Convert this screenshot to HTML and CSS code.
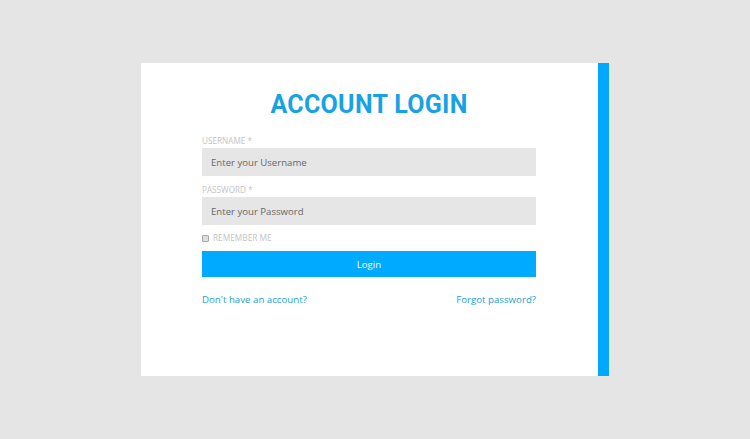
FILE: index.html
```html
<!DOCTYPE html>
<html lang="en">
<head>
    <meta charset="UTF-8">
    <meta name="viewport" content="width=device-width, initial-scale=1.0">
    <title>Account Login</title>
    <link rel="stylesheet" href="styles.css">
</head>
<body>
    <!-- Login Card -->
    <div class="login-card">
        <div class="login-body">
            <h1>ACCOUNT LOGIN</h1>
            <form class="login-form">
                <label class="field-label" for="username">USERNAME *</label>
                <input class="field-input" type="text" id="username" placeholder="Enter your Username">
                <label class="field-label" for="password">PASSWORD *</label>
                <input class="field-input" type="password" id="password" placeholder="Enter your Password">
                <label class="remember">
                    <span class="checkbox"></span>
                    REMEMBER ME
                </label>
                <button type="button" class="login-btn">Login</button>
                <div class="login-links">
                    <a href="#">Don't have an account?</a>
                    <a href="#">Forgot password?</a>
                </div>
            </form>
        </div>
        <div class="accent-bar"></div>
    </div>
</body>
</html>
```

FILE: styles.css
```css
/* Global Styling */
body {
    margin: 0;
    background-color: #e5e5e5;
    font-family: "Open Sans", sans-serif;
    height: 439px;
}
/* Login Card */
.login-card {
    display: flex;
    width: 468px;
    height: 313px;
    margin: 63px 0 0 141px;
}
.login-body {
    flex-grow: 1;
    background-color: #fff;
    padding: 0 62px 0 61px;
}
.accent-bar {
    width: 11px;
    background-color: #00a8ff;
}
.login-body h1 {
    font-family: Roboto, sans-serif;
    font-weight: 700;
    font-size: 25px;
    letter-spacing: 0.3px;
    color: #18a2e6;
    text-align: center;
    margin: 28px 0 17px;
    line-height: 27px;
}
/* Form */
.login-form {
    display: flex;
    flex-direction: column;
}
.field-label {
    font-size: 8.2px;
    color: #c4c4c4;
    line-height: 12px;
    margin-bottom: 1px;
}
.field-input {
    height: 28px;
    border: none;
    background-color: #e6e6e6;
    padding: 0 9px;
    font-family: "Open Sans", sans-serif;
    font-size: 9.6px;
    color: #555;
    margin-bottom: 8px;
    outline: none;
}
.field-input::placeholder {
    color: #666;
}
.remember {
    display: flex;
    align-items: center;
    gap: 4px;
    font-size: 8.3px;
    color: #c4c4c4;
    line-height: 12px;
    margin: -1px 0 7px;
}
.checkbox {
    width: 5px;
    height: 5px;
    border: 1px solid #aaa;
    border-radius: 1px;
    background-color: #ddd;
}
.login-btn {
    height: 26px;
    border: none;
    background-color: #00aaff;
    color: #fff;
    font-family: "Open Sans", sans-serif;
    font-size: 9.6px;
    cursor: pointer;
}
.login-links {
    display: flex;
    justify-content: space-between;
    margin-top: 16px;
}
.login-links a {
    font-size: 9.7px;
    color: #1d9fd5;
    text-decoration: none;
}
```
